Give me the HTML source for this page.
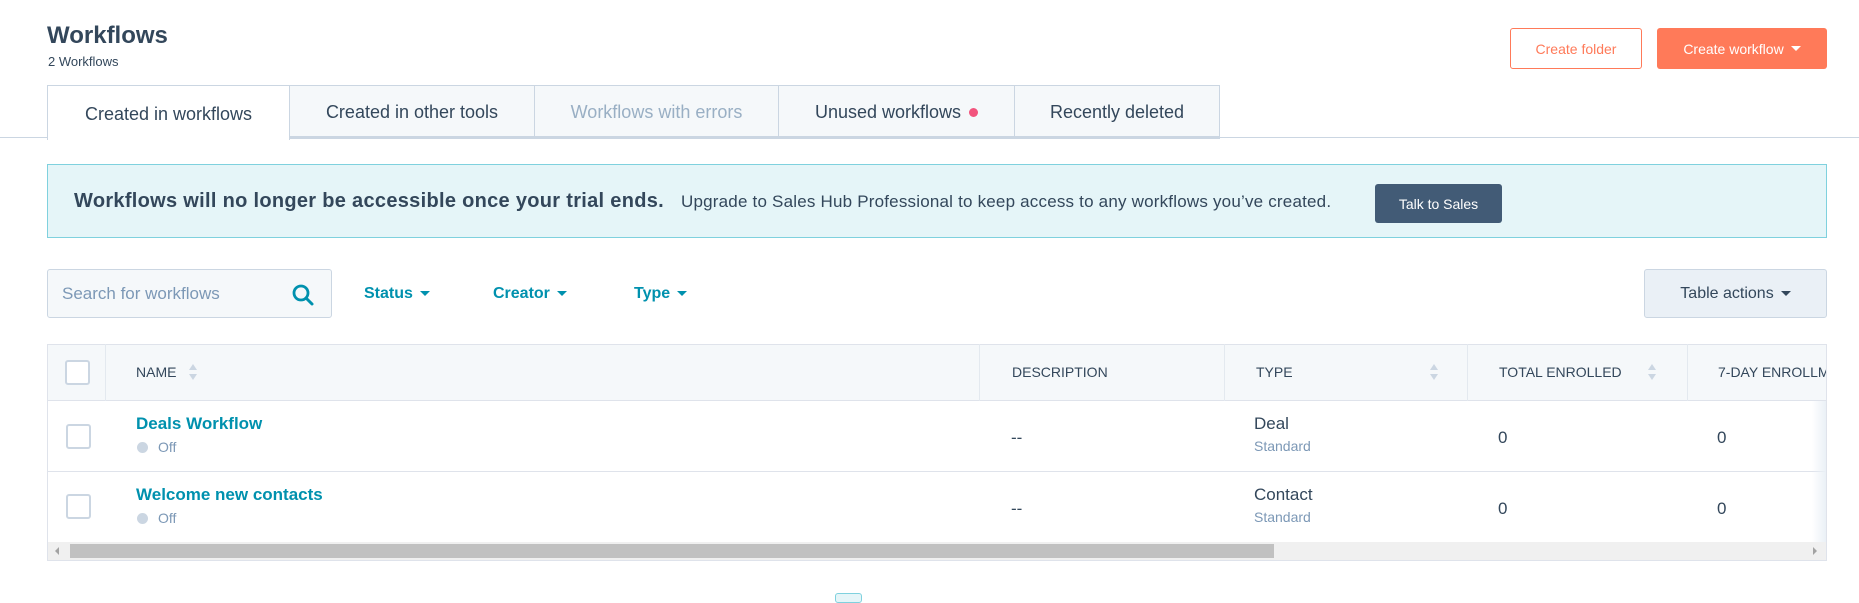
<!DOCTYPE html>
<html><head><meta charset="utf-8"><style>
*{box-sizing:border-box;margin:0;padding:0}
body{width:1859px;height:599px;overflow:hidden;background:#fff;font-family:"Liberation Sans",sans-serif;color:#33475b;position:relative}
.a{position:absolute}
.tab{position:absolute;top:85px;height:54px;border:1px solid #cbd6e2;border-bottom:3px solid #cbd6e2;background:#f5f8fa;font-size:18px;display:flex;align-items:center;justify-content:center;color:#33475b;padding-top:2px}
.caret{display:inline-block;width:0;height:0;border-left:5px solid transparent;border-right:5px solid transparent;border-top:5px solid currentColor;margin-left:7px;vertical-align:middle}
.cb{position:absolute;width:25px;height:25px;border:2px solid #cbd6e2;border-radius:3px;background:#fff}
.th{position:absolute;top:372px;font-size:14px;color:#33475b;transform:translateY(-50%)}
.sort{position:absolute;width:8px;height:16px}
.sort:before{content:"";position:absolute;top:0;left:0;border-left:4px solid transparent;border-right:4px solid transparent;border-bottom:6px solid #cbd6e2}
.sort:after{content:"";position:absolute;bottom:0;left:0;border-left:4px solid transparent;border-right:4px solid transparent;border-top:6px solid #cbd6e2}
.vl{position:absolute;top:344px;height:57px;width:1px;background:#e3e9ef}
.link{color:#0091ae;font-size:17px;font-weight:bold}
.off{font-size:14px;color:#7c98b6}
.dot{display:inline-block;width:11px;height:11px;border-radius:50%;background:#cbd6e2;margin-right:10px;vertical-align:-1px}
.cell{position:absolute;font-size:17px}
</style></head><body>
<div class="a" style="left:47px;top:22px;font-size:24px;font-weight:bold;color:#33475b">Workflows</div>
<div class="a" style="left:48px;top:54px;font-size:13px">2 Workflows</div>
<div class="a" style="left:1510px;top:28px;width:132px;height:41px;border:1px solid #ff7a59;border-radius:3px;color:#ff7a59;font-size:14px;display:flex;align-items:center;justify-content:center">Create folder</div>
<div class="a" style="left:1657px;top:28px;width:170px;height:41px;background:#ff7a59;border-radius:3px;color:#fff;font-size:14px;display:flex;align-items:center;justify-content:center">Create workflow<span class="caret"></span></div>
<div class="a" style="left:0;top:137px;width:1859px;height:1px;background:#cbd6e2"></div>
<div class="tab" style="left:289px;width:246px">Created in other tools</div>
<div class="tab" style="left:534px;width:245px;color:#99afc4">Workflows with errors</div>
<div class="tab" style="left:778px;width:237px">Unused workflows<span style="display:inline-block;width:9px;height:9px;border-radius:50%;background:#f2547d;margin-left:8px"></span></div>
<div class="tab" style="left:1014px;width:206px">Recently deleted</div>
<div class="tab" style="left:47px;width:243px;background:#fff;border-bottom:none;height:55px">Created in workflows</div>
<div class="a" style="left:47px;top:164px;width:1780px;height:74px;background:#e5f5f8;border:1px solid #7fd1de"></div>
<div class="a" style="left:74px;top:190px;font-size:20px;font-weight:bold;letter-spacing:0.3px">Workflows will no longer be accessible once your trial ends.</div>
<div class="a" style="left:681px;top:192px;font-size:17px;letter-spacing:0.2px">Upgrade to Sales Hub Professional to keep access to any workflows you’ve created.</div>
<div class="a" style="left:1375px;top:184px;width:127px;height:39px;background:#425b76;border-radius:3px;color:#fff;font-size:14px;display:flex;align-items:center;justify-content:center">Talk to Sales</div>
<div class="a" style="left:47px;top:269px;width:285px;height:49px;border:1px solid #cbd6e2;border-radius:3px;background:#f5f8fa"></div>
<div class="a" style="left:62px;top:284px;font-size:17px;color:#7c98b6">Search for workflows</div>
<svg class="a" style="left:291px;top:283px" width="24" height="24" viewBox="0 0 24 24"><circle cx="10" cy="10" r="7" fill="none" stroke="#0091ae" stroke-width="2.8"/><path d="M15 15l6 6" stroke="#0091ae" stroke-width="3" stroke-linecap="round"/></svg>
<div class="a" style="left:364px;top:285px;font-size:16px;font-weight:bold;color:#0091ae">Status<span class="caret"></span></div>
<div class="a" style="left:493px;top:285px;font-size:16px;font-weight:bold;color:#0091ae">Creator<span class="caret"></span></div>
<div class="a" style="left:634px;top:285px;font-size:16px;font-weight:bold;color:#0091ae">Type<span class="caret"></span></div>
<div class="a" style="left:1644px;top:269px;width:183px;height:49px;border:1px solid #cbd6e2;border-radius:3px;background:#eaf0f6;font-size:16px;display:flex;align-items:center;justify-content:center">Table actions<span class="caret"></span></div>
<div class="a" style="left:47px;top:344px;width:1780px;height:217px;border:1px solid #dfe3eb"></div>
<div class="a" style="left:48px;top:345px;width:1778px;height:56px;background:#f5f8fa;border-bottom:1px solid #dfe3eb"></div>
<div class="vl" style="left:105px"></div><div class="vl" style="left:979px"></div><div class="vl" style="left:1224px"></div><div class="vl" style="left:1467px"></div><div class="vl" style="left:1687px"></div>
<div class="cb" style="left:65px;top:360px"></div>
<div class="th" style="left:136px">NAME</div><div class="sort" style="left:189px;top:364px"></div>
<div class="th" style="left:1012px">DESCRIPTION</div>
<div class="th" style="left:1256px">TYPE</div><div class="sort" style="left:1430px;top:364px"></div>
<div class="th" style="left:1499px">TOTAL ENROLLED</div><div class="sort" style="left:1648px;top:364px"></div>
<div class="th" style="left:1718px;white-space:nowrap;width:108px;overflow:hidden">7-DAY ENROLLMENT</div>
<div class="a" style="left:48px;top:471px;width:1778px;height:1px;background:#dfe3eb"></div>
<div class="cb" style="left:66px;top:424px"></div>
<div class="a link" style="left:136px;top:414px">Deals Workflow</div>
<div class="a off" style="left:137px;top:439px"><span class="dot"></span>Off</div>
<div class="cell" style="left:1011px;top:428px">--</div>
<div class="cell" style="left:1254px;top:414px">Deal</div>
<div class="a off" style="left:1254px;top:438px">Standard</div>
<div class="cell" style="left:1498px;top:428px">0</div>
<div class="cell" style="left:1717px;top:428px">0</div>
<div class="cb" style="left:66px;top:494px"></div>
<div class="a link" style="left:136px;top:485px">Welcome new contacts</div>
<div class="a off" style="left:137px;top:510px"><span class="dot"></span>Off</div>
<div class="cell" style="left:1011px;top:499px">--</div>
<div class="cell" style="left:1254px;top:485px">Contact</div>
<div class="a off" style="left:1254px;top:509px">Standard</div>
<div class="cell" style="left:1498px;top:499px">0</div>
<div class="cell" style="left:1717px;top:499px">0</div>
<div class="a" style="left:1812px;top:401px;width:14px;height:141px;background:linear-gradient(to right,rgba(234,240,246,0),#eaf0f6)"></div>
<div class="a" style="left:48px;top:542px;width:1778px;height:18px;background:#f0f0f0"></div>
<div class="a" style="left:70px;top:544px;width:1204px;height:14px;background:#c1c1c1"></div>
<div class="a" style="left:55px;top:547px;border-top:4px solid transparent;border-bottom:4px solid transparent;border-right:4px solid #a3a3a3"></div>
<div class="a" style="left:1813px;top:547px;border-top:4px solid transparent;border-bottom:4px solid transparent;border-left:4px solid #a3a3a3"></div>
<div class="a" style="left:835px;top:593px;width:27px;height:10px;border:1px solid #7fd1de;border-radius:3px;background:#e5f5f8"></div>
</body></html>
